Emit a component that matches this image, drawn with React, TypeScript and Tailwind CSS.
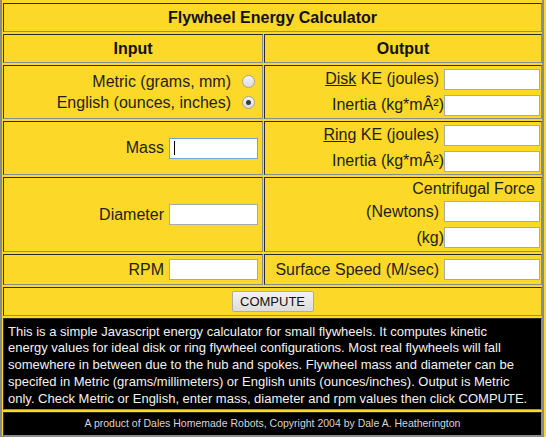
import React from "react";

const CELL =
  "border border-[#8c8c8c] border-t-[#2b2b2b] border-l-[#2b2b2b]";

const DESCRIPTION = [
  "This is a simple Javascript energy calculator for small flywheels. It computes kinetic",
  "energy values for ideal disk or ring flywheel configurations. Most real flywheels will fall",
  "somewhere in between due to the hub and spokes. Flywheel mass and diameter can be",
  "specifed in Metric (grams/millimeters) or English units (ounces/inches). Output is Metric",
  "only. Check Metric or English, enter mass, diameter and rpm values then click COMPUTE.",
];

function Radio({ checked }: { checked?: boolean }) {
  return (
    <span className="ml-[11px] w-[13px] h-[13px] rounded-full border border-[#a3a3a3] bg-gradient-to-b from-[#f6f6f6] to-[#dadada] flex items-center justify-center shrink-0">
      {checked && <span className="w-[5px] h-[5px] rounded-full bg-[#3c3c3c]" />}
    </span>
  );
}

function Field({ wide, focused }: { wide?: boolean; focused?: boolean }) {
  return (
    <span
      className={`${wide ? "w-[96px]" : "w-[89px]"} h-[21px] bg-white border ${
        focused ? "border-[#6fa6dc]" : "border-[#aaaaaa]"
      } flex items-center shrink-0`}
    >
      {focused && <span className="ml-[4px] w-[1px] h-[14px] bg-black" />}
    </span>
  );
}

export default function App() {
  return (
    <div className="w-[546px] h-[437px] bg-[#fcd828] font-['Liberation_Sans',Arial,sans-serif] text-[#1e1e1e]">
      <div className="w-[544px] border-l-2 border-r-2 border-b border-[#8a8a8a] pt-[3px] pl-[1px]">
        <div className="grid grid-cols-[260px_278px] gap-x-[1px] gap-y-[2px]">
          <div className={`${CELL} col-span-2 h-[29px] flex items-center justify-center font-bold text-[16px] text-[#111]`}>
            Flywheel Energy Calculator
          </div>

          <div className={`${CELL} h-[29px] flex items-center justify-center font-bold text-[16px] text-[#111]`}>
            Input
          </div>
          <div className={`${CELL} h-[29px] flex items-center justify-center font-bold text-[16px] text-[#111]`}>
            Output
          </div>

          <div className={`${CELL} h-[54px] flex flex-col justify-center items-end pr-[7px] text-[16px]`}>
            <div className="h-[21px] flex items-center">
              Metric (grams, mm)
              <Radio />
            </div>
            <div className="h-[21px] flex items-center">
              English (ounces, inches)
              <Radio checked />
            </div>
          </div>
          <div className={`${CELL} h-[54px] flex flex-col justify-center items-end gap-[2px] pr-[1px] text-[16px]`}>
            <div className="flex items-center">
              <span>
                <span className="underline">Disk</span> KE (joules)
              </span>
              <span className="w-[5px]" />
              <Field wide />
            </div>
            <div className="flex items-center">
              <span>Inertia (kg*mÂ²)</span>
              <Field wide />
            </div>
          </div>

          <div className={`${CELL} h-[54px] flex items-center justify-end pr-[4px] text-[16px]`}>
            <span className="mr-[5px]">Mass</span>
            <Field focused />
          </div>
          <div className={`${CELL} h-[54px] flex flex-col justify-center items-end gap-[2px] pr-[1px] text-[16px]`}>
            <div className="flex items-center">
              <span>
                <span className="underline">Ring</span> KE (joules)
              </span>
              <span className="w-[5px]" />
              <Field wide />
            </div>
            <div className="flex items-center">
              <span>Inertia (kg*mÂ²)</span>
              <Field wide />
            </div>
          </div>

          <div className={`${CELL} h-[75px] flex items-center justify-end pr-[4px] text-[16px]`}>
            <span className="mr-[5px]">Diameter</span>
            <Field />
          </div>
          <div className={`${CELL} h-[75px] flex flex-col justify-center items-end gap-[2px] pr-[1px] text-[16px]`}>
            <div className="pr-[5px] leading-[18px]">Centrifugal Force</div>
            <div className="flex items-center">
              <span className="mr-[5px]">(Newtons)</span>
              <Field wide />
            </div>
            <div className="flex items-center">
              <span>(kg)</span>
              <Field wide />
            </div>
          </div>

          <div className={`${CELL} h-[31px] flex items-center justify-end pr-[4px] text-[16px]`}>
            <span className="mr-[5px]">RPM</span>
            <Field />
          </div>
          <div className={`${CELL} h-[31px] flex items-center justify-end pr-[1px] text-[16px]`}>
            <span className="mr-[5px]">Surface Speed (M/sec)</span>
            <Field wide />
          </div>

          <div className={`${CELL} col-span-2 h-[29px] flex items-center justify-center`}>
            <button className="w-[82px] h-[21px] rounded-[2px] border border-[#acacac] bg-gradient-to-b from-[#f3f3f3] to-[#dcdcdc] text-[13px] text-[#111] leading-none">
              COMPUTE
            </button>
          </div>

          <div className={`${CELL} col-span-2 h-[92px] bg-black text-[#f2f2f2] text-[13px] leading-[16.7px] px-[4px] pt-[3px] flex flex-col justify-center`}>
            {DESCRIPTION.map((line) => (
              <div key={line} className="whitespace-nowrap">
                {line}
              </div>
            ))}
          </div>

          <div className={`${CELL} col-span-2 h-[24px] bg-black text-[#d6d6d6] text-[10.5px] flex items-center justify-center`}>
            A product of Dales Homemade Robots, Copyright 2004 by Dale A. Heatherington
          </div>
        </div>
      </div>
    </div>
  );
}
